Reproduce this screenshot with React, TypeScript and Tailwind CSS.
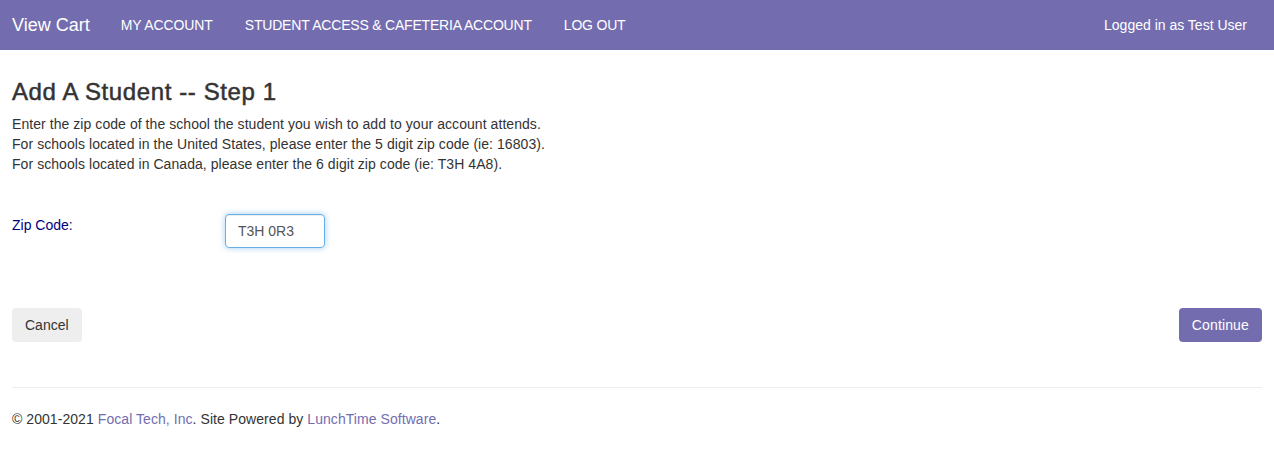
import React from "react";

export default function App() {
  return (
    <div className="min-h-[458px] bg-white text-[#333] text-[14px] leading-[20px]" style={{ fontFamily: '"Liberation Sans", Arial, sans-serif' }}>
      <nav className="h-[50px] bg-[#736db0] flex items-center justify-between text-white">
        <div className="flex items-center">
          <a className="pl-[12px] pr-[15px] text-[18px] leading-[20px]">View Cart</a>
          <a className="px-[16px] text-[14px] tracking-[-0.1px]">MY ACCOUNT</a>
          <a className="px-[16px] text-[14px] tracking-[-0.2px]">STUDENT ACCESS &amp; CAFETERIA ACCOUNT</a>
          <a className="px-[16px] text-[14px] tracking-[-0.2px]">LOG OUT</a>
        </div>
        <div className="pr-[27px] text-[14px]">Logged in as Test User</div>
      </nav>
      <div className="px-[12px]">
        <h3 className="mt-[29px] mb-[9px] text-[24px] leading-[26px] font-normal text-[#333] tracking-[0.6px] [-webkit-text-stroke:0.5px_#333]">Add A Student -- Step 1</h3>
        <div className="tracking-[0.06px]">
          <p>Enter the zip code of the school the student you wish to add to your account attends.</p>
          <p>For schools located in the United States, please enter the 5 digit zip code (ie: 16803).</p>
          <p>For schools located in Canada, please enter the 6 digit zip code (ie: T3H 4A8).</p>
        </div>
        <div className="flex items-start mt-[40px]">
          <label className="w-[213px] pt-[1px] text-[#000080]">Zip Code:</label>
          <input
            className="w-[100px] h-[34px] px-[12px] border border-[#66afe9] rounded-[4px] text-[#555] text-[14px] outline-none shadow-[inset_0_1px_1px_rgba(0,0,0,0.075),0_0_6px_rgba(102,175,233,0.6)]"
            defaultValue="T3H 0R3"
          />
        </div>
        <div className="flex justify-between mt-[60px]">
          <button className="h-[34px] px-[13px] bg-[#eeeeee] rounded-[4px] text-[#333] text-[14px]">Cancel</button>
          <button className="h-[34px] px-[13px] bg-[#736db0] rounded-[4px] text-white text-[14px] tracking-[0.15px]">Continue</button>
        </div>
        <hr className="mt-[45px] border-t border-[#eeeeee]" />
        <p className="mt-[21px] tracking-[0.06px]">
          © 2001-2021 <a className="text-[#736db0]">Focal Tech, Inc</a>. Site Powered by <a className="text-[#736db0]">LunchTime Software</a>.
        </p>
      </div>
    </div>
  );
}
